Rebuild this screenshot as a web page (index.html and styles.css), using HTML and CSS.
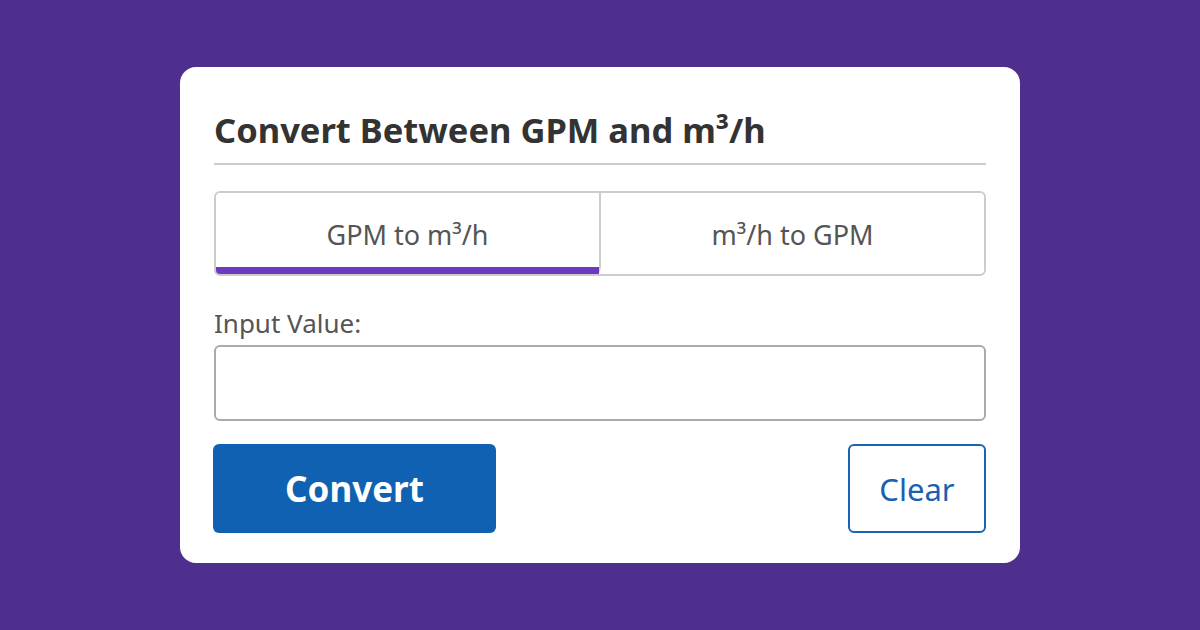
FILE: index.html
```html
<!DOCTYPE html>
<html lang="en">
<head>
  <meta charset="UTF-8">
  <meta name="viewport" content="width=device-width, initial-scale=1.0">
  <title>GPM to m³/h Converter</title>
  <link rel="stylesheet" href="styles.css">
</head>
<body>
  <div class="converter">
    <h2 class="converter__title">Convert Between GPM and m³/h</h2>
    <div class="tabs">
      <button class="tabs__item tabs__item--active">GPM to m³/h</button>
      <button class="tabs__item">m³/h to GPM</button>
    </div>
    <label class="converter__label" for="value">Input Value:</label>
    <input class="converter__input" id="value" type="text">
    <div class="converter__actions">
      <button class="btn btn--primary">Convert</button>
      <button class="btn btn--outline">Clear</button>
    </div>
  </div>
</body>
</html>
```

FILE: styles.css
```css
* {
  box-sizing: border-box;
  font-family: 'Noto Sans', sans-serif;
}
html, body {
  margin: 0;
  height: 100%;
}
body {
  background-color: #4e2f8e;
  display: flex;
  justify-content: center;
  align-items: center;
}
button {
  border: 0;
  background: none;
  outline: none;
  cursor: pointer;
}
.converter {
  width: 840px;
  height: 496px;
  background: #fff;
  border-radius: 16px;
  padding: 34px 34px;
  display: flex;
  flex-direction: column;
}
.converter__title {
  margin: 0;
  font-size: 34.5px;
  font-weight: 700;
  color: #333;
  line-height: 34px;
  padding: 12px 0 16px;
  border-bottom: 2px solid #ccc;
}
.tabs {
  margin-top: 26px;
  display: flex;
  height: 85px;
  flex: none;
  border: 2px solid #ccc;
  border-radius: 6px;
  overflow: hidden;
}
.tabs__item {
  flex: 1;
  font-size: 27px;
  color: #555;
  padding-top: 10px;
  border-bottom: 7px solid transparent;
}
.tabs__item + .tabs__item {
  border-left: 2px solid #ccc;
}
.tabs__item--active {
  border-bottom-color: #6a3bbf;
}
.converter__label {
  margin-top: 34px;
  font-size: 26px;
  color: #555;
  line-height: 1;
}
.converter__input {
  margin-top: 9px;
  height: 76px;
  flex: none;
  border: 2px solid #aaa;
  border-radius: 6px;
  font-size: 24px;
  padding: 0 14px;
}
.converter__actions {
  margin-top: 23px;
  display: flex;
  justify-content: space-between;
}
.btn {
  height: 89px;
  border-radius: 6px;
}
.btn--primary {
  width: 283px;
  margin-left: -1px;
  background-color: #1161b3;
  color: #fff;
  font-size: 35px;
  font-weight: 700;
}
.btn--outline {
  width: 138px;
  border: 2px solid #1a62b2;
  color: #1a5fb0;
  font-size: 31px;
}
```
